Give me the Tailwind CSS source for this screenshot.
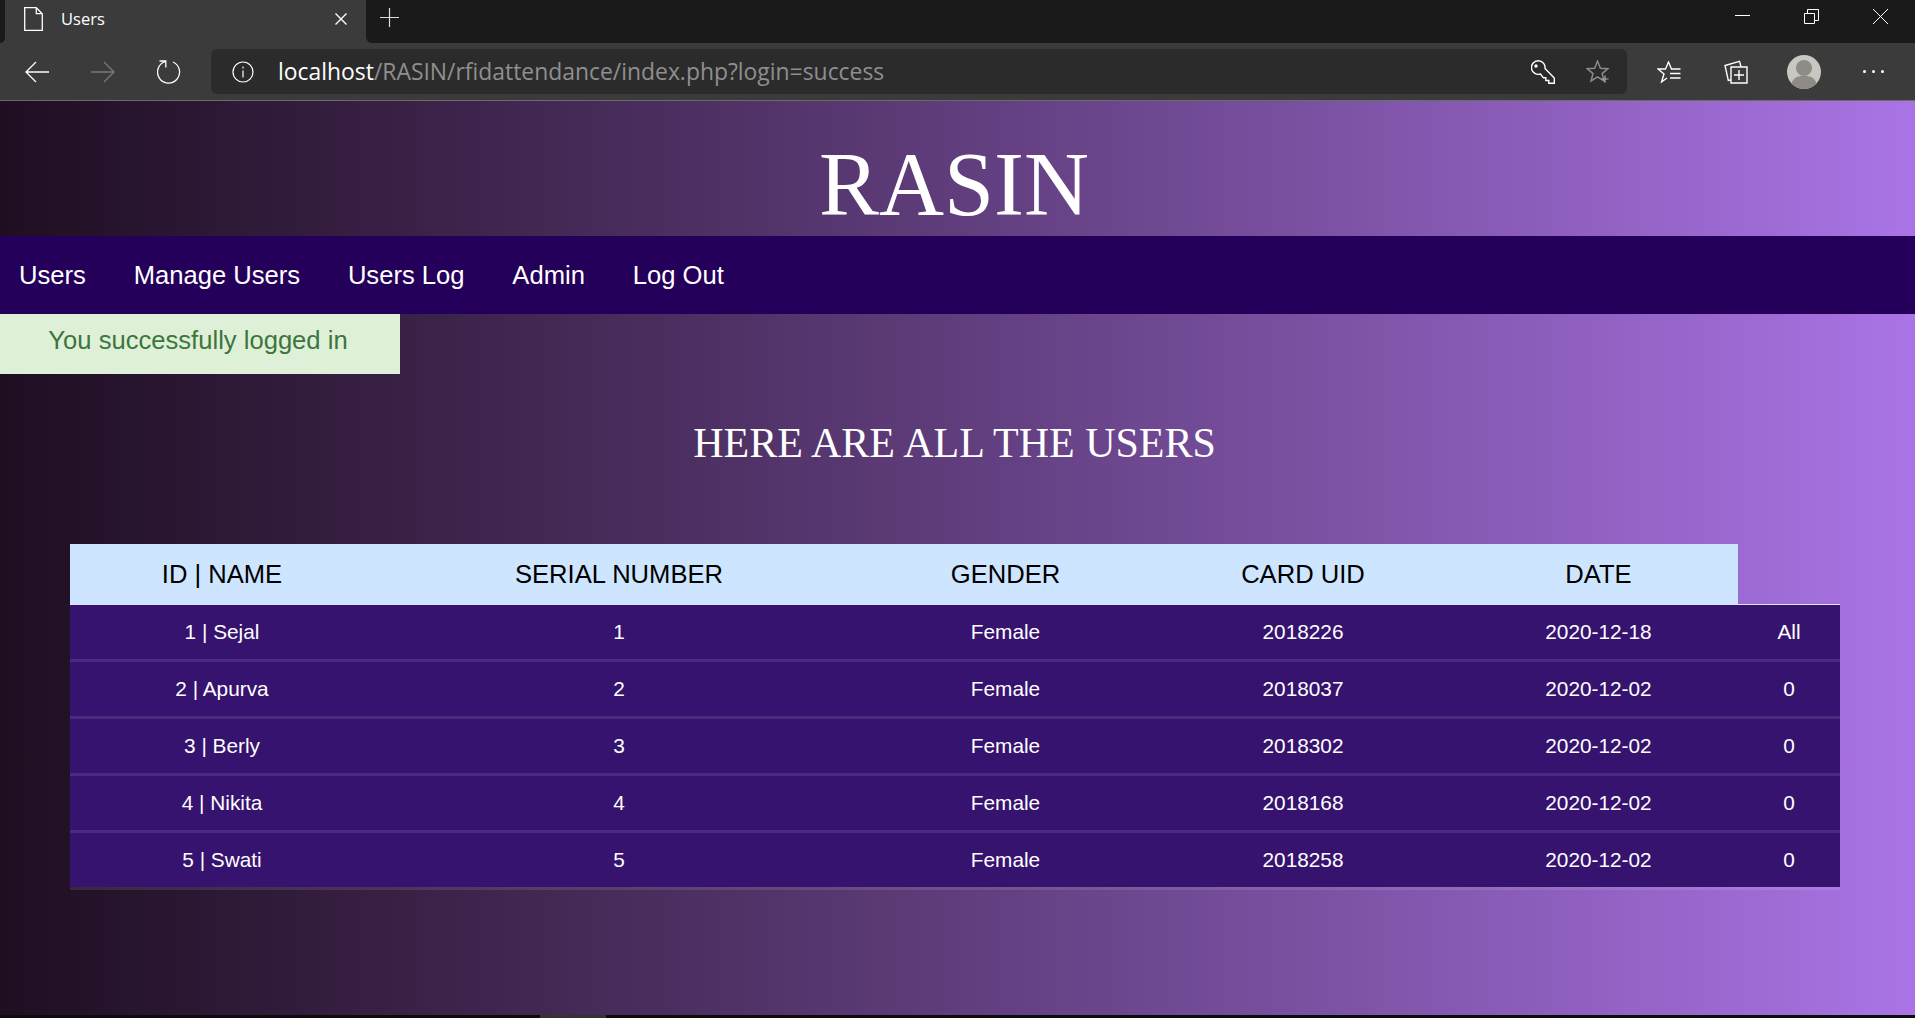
<!DOCTYPE html>
<html lang="en">
<head>
    <meta charset="UTF-8">
    <script src="https://cdn.jsdelivr.net/npm/@tailwindcss/browser@4"></script>
    <title>Users</title>
</head>
<body class="h-[1018px] w-[1915px] overflow-hidden flex flex-col bg-[#0c0c0c] font-['Liberation_Sans',sans-serif]">

    <!-- browser tabs -->
    <div class="h-[43px] bg-[#3b3b3b] flex shrink-0 font-['Open_Sans',sans-serif]">
        <div class="w-[5px] bg-[#1a1a1a] rounded-br-md"></div>
        <div class="w-[361px] flex items-center pl-[19px] pr-[19px] pb-[5px]">
            <svg class="w-[19px] h-[24px]" viewBox="0 0 19 24" fill="none" stroke="#fff" stroke-width="1.3"><path d="M.7.7h11.600l6 6v16.600H.7z M12.300.7v6h6"/></svg>
            <span class="text-white text-[16.5px] ml-[18px] grow">Users</span>
            <svg class="w-3 h-3" viewBox="0 0 12 12" stroke="#fff" stroke-width="1.4"><path d="M.5.5l11 11M11.500.5l-11 11"/></svg>
        </div>
        <div class="grow bg-[#1a1a1a] rounded-bl-md flex items-start">
            <svg class="w-[19px] h-[19px] ml-[14px] mt-[8px]" viewBox="0 0 19 19" stroke="#ddd" stroke-width="1.2"><path d="M9.500 0v19M0 9.500h19"/></svg>
            <div class="ml-auto flex items-start">
                <div class="w-[69px] flex justify-center pt-[15px]"><div class="w-[15px] h-px bg-white"></div></div>
                <div class="w-[69px] flex justify-center pt-[9px]">
                    <svg class="w-[15px] h-[15px]" viewBox="0 0 15 15" fill="none" stroke="#fff"><path d="M.5 4.500h10v10H.5z M3.500 4.500V.5h11V11.500H10.500"/></svg>
                </div>
                <div class="w-[69px] flex justify-center pt-[9px]">
                    <svg class="w-[15px] h-[15px]" viewBox="0 0 15 15" stroke="#fff"><path d="M0 0l15 15M15 0L0 15"/></svg>
                </div>
            </div>
        </div>
    </div>

    <!-- browser toolbar -->
    <div class="h-[58px] bg-[#3b3b3b] border-b border-[#6b6b6b] flex items-center shrink-0 font-['Open_Sans',sans-serif]">
        <div class="w-[211px] flex items-center pl-[25px] gap-[42px]">
            <svg class="w-6 h-[22px]" viewBox="0 0 24 22" fill="none" stroke="#fff" stroke-width="1.3"><path d="M24 11H1M11 1 1 11l10 10"/></svg>
            <svg class="w-6 h-[22px]" viewBox="0 0 24 22" fill="none" stroke="#7a7a7a" stroke-width="1.3"><path d="M0 11h23M13 1l10 10-10 10"/></svg>
            <svg class="w-6 h-6" viewBox="0 0 24 24" fill="none" stroke="#fff" stroke-width="1.3"><path d="M16 2A11 11 0 1 1 8.500 1.500M2.500 1H8.800V7.500"/></svg>
        </div>
        <div class="w-[1416px] h-[45px] bg-[#2b2b2b] rounded-md flex items-center pl-[21px] pr-[18px]">
            <svg class="w-[22px] h-[22px]" viewBox="0 0 22 22" fill="none" stroke="#fff" stroke-width="1.2"><circle cx="11" cy="11" r="10"/><path d="M11 9.500v7M11 5.500v2"/></svg>
            <span class="ml-[24px] pt-[2px] text-[22.9px] text-[#8f8f8f] grow"><span class="text-white">localhost</span>/RASIN/rfidattendance/index.php?login=success</span>
            <svg class="w-6 h-6" viewBox="0 0 24 24" fill="none" stroke="#fff" stroke-width="1.4"><path d="M14 8.500 23.300 18v5.300h-5.500v-2.800h-3v-2.800h-2.500L9.500 14A6.800 6.800 0 1 1 14 8.500z"/><circle cx="5" cy="6" r="1" fill="#fff"/></svg>
            <svg class="w-[23px] h-[23px] ml-[31px]" viewBox="0 0 23 23" fill="none" stroke="#8a8a8a" stroke-width="1.5"><path d="M11.500 1l2.900 7.300 7.600.4-5.900 4.900 2 7.400-6.600-4.100-6.500 4.100 2-7.400-5.900-4.900 7.600-.4z"/><path d="M15.500 19h7M19 15.500v7" stroke="#aaa" stroke-width="1.200"/></svg>
        </div>
        <div class="flex items-center pl-[30px]">
            <svg class="w-6 h-[22px]" viewBox="0 0 24 22" fill="none" stroke="#fff" stroke-width="1.4"><path d="M23.500 8H14.500L11.500 1 8.500 8H1l6 5-2.500 8 5.500-4M13 12.500h10.500M13 17h10.500"/></svg>
            <svg class="w-6 h-6 ml-[43px]" viewBox="0 0 24 24" fill="none" stroke="#fff" stroke-width="1.4"><path d="M7 20 4.300 20.500 1 5.500 15.500 1.300l1.500 5.500"/><path d="M7 7h16v16H7zM15 10v10M10 15h10"/></svg>
            <div class="ml-[39px] w-[34px] h-[34px] rounded-full bg-[#c9c7c2] overflow-hidden relative">
                <div class="absolute left-[9px] top-[5px] w-4 h-4 rounded-full bg-[#8f8c88]"></div>
                <div class="absolute left-[4px] top-[21px] w-[26px] h-[20px] rounded-full bg-[#8f8c88]"></div>
            </div>
            <div class="ml-[42px] flex gap-[6px]">
                <div class="w-[3px] h-[3px] rounded-full bg-white"></div>
                <div class="w-[3px] h-[3px] rounded-full bg-white"></div>
                <div class="w-[3px] h-[3px] rounded-full bg-white"></div>
            </div>
        </div>
    </div>

    <!-- page -->
    <div class="h-[914px] shrink-0 bg-linear-to-r from-[#1f0e22] to-[#aa74e6]">
        <header class="w-[1908px] h-[135px] flex justify-center items-center pt-[33px]">
            <h1 class="text-[90px] leading-none text-white font-['Liberation_Serif',serif]">RASIN</h1>
        </header>
        <nav class="h-[78px] bg-[#25005a] flex items-center pl-[19px] gap-[47.8px] text-[25.6px] text-white">
            <a href="#">Users</a>
            <a href="#">Manage Users</a>
            <a href="#">Users Log</a>
            <a href="#">Admin</a>
            <a href="#">Log Out</a>
        </nav>
        <div class="w-[400px] h-[60px] bg-[#dff0d8] text-[#3c763d] text-[25.6px] text-center pt-[7px] pr-1">You successfully logged in</div>

        <h2 class="w-[1909px] mt-[46px] text-center text-[42px] leading-[46px] text-white font-['Liberation_Serif',serif]">HERE ARE ALL THE USERS</h2>

        <div class="ml-[70px] mt-[78px] w-[1770px]">
            <div class="w-[1668px] h-[60px] bg-[#cde5ff] grid grid-cols-[304px_490px_283px_312px_279px] items-center text-center text-[25.6px] text-black">
                <div>ID | NAME</div>
                <div>SERIAL NUMBER</div>
                <div>GENDER</div>
                <div>CARD UID</div>
                <div>DATE</div>
            </div>
            <div class="border-t border-[#dfe6f0] text-white text-[20.8px] text-center">
                <div class="h-[57px] bg-[#36136f] border-b-[3px] border-white/10 grid grid-cols-[304px_490px_283px_312px_279px_102px] items-center">
                    <div>1 | Sejal</div><div>1</div><div>Female</div><div>2018226</div><div>2020-12-18</div><div>All</div>
                </div>
                <div class="h-[57px] bg-[#36136f] border-b-[3px] border-white/10 grid grid-cols-[304px_490px_283px_312px_279px_102px] items-center">
                    <div>2 | Apurva</div><div>2</div><div>Female</div><div>2018037</div><div>2020-12-02</div><div>0</div>
                </div>
                <div class="h-[57px] bg-[#36136f] border-b-[3px] border-white/10 grid grid-cols-[304px_490px_283px_312px_279px_102px] items-center">
                    <div>3 | Berly</div><div>3</div><div>Female</div><div>2018302</div><div>2020-12-02</div><div>0</div>
                </div>
                <div class="h-[57px] bg-[#36136f] border-b-[3px] border-white/10 grid grid-cols-[304px_490px_283px_312px_279px_102px] items-center">
                    <div>4 | Nikita</div><div>4</div><div>Female</div><div>2018168</div><div>2020-12-02</div><div>0</div>
                </div>
                <div class="h-[57px] bg-[#36136f] bg-clip-padding border-b-[3px] border-white/10 grid grid-cols-[304px_490px_283px_312px_279px_102px] items-center">
                    <div>5 | Swati</div><div>5</div><div>Female</div><div>2018258</div><div>2020-12-02</div><div>0</div>
                </div>
            </div>
        </div>
    </div>

    <!-- taskbar edge -->
    <div class="ml-[540px] w-[66px] h-[3px] bg-[#333]"></div>
</body>
</html>
